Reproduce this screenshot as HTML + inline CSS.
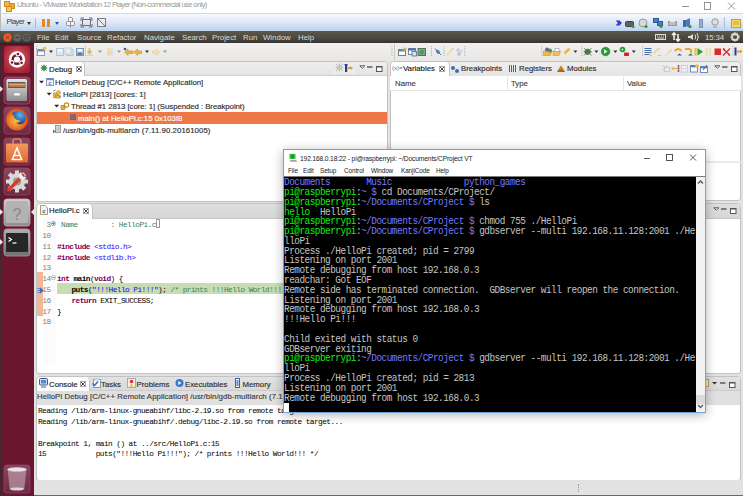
<!DOCTYPE html>
<html><head><meta charset="utf-8">
<style>
*{margin:0;padding:0;box-sizing:border-box}
html,body{width:743px;height:496px;overflow:hidden;background:#fff;font-family:"Liberation Sans",sans-serif}
.a{position:absolute}
.t{position:absolute;white-space:pre;line-height:1}
.code{font-family:"Liberation Mono",monospace;font-size:7.8px;letter-spacing:-0.56px}
.term{font-family:"Liberation Mono",monospace;font-size:9.4px;letter-spacing:-0.49px;line-height:9.79px;transform:scaleY(1.1);transform-origin:0 75%}
.mono{font-family:"Liberation Mono",monospace}
#title{left:0;top:0;width:743px;height:13px;background:#fff;border-left:1px solid #b9b9b9}
#vmtb{left:0;top:13px;width:743px;height:18px;background:linear-gradient(#f7f9fd,#dde7f4 50%,#bdd2ee);border-top:1px solid #cbdaf0;border-left:1px solid #b9b9b9}
#panel{left:0;top:31px;width:743px;height:12px;background:linear-gradient(#5c584b,#46443d 70%,#35332f)}
#launcher{left:0;top:43px;width:34px;height:453px;background:#69162e;border-left:1px solid #3c2a30}
#eclipse{left:34px;top:43px;width:709px;height:453px;background:#e3e3e3}
.menu{color:#dfdbd2;font-size:7.8px;top:33.5px}
.view{position:absolute;background:#fff;border:1px solid #c2c2c2;border-radius:4px 4px 3px 3px;overflow:hidden}
.tabrow{position:absolute;left:0;top:0;right:0;background:linear-gradient(#eeeeee,#e4e4e4);border-bottom:1px solid #d0d0d0}
.tab{position:absolute;top:0;background:#fff;border-right:1px solid #c2c2c2;border-radius:4px 4px 0 0;font-size:7.8px;color:#333}
.ui{font-size:7.8px;color:#2e2e2e;-webkit-text-stroke:0.15px currentColor}
#term{left:283px;top:149px;width:423px;height:264px;background:#fff;border:1px solid #6fa3d8;box-shadow:0 2px 10px rgba(0,0,0,.3)}
</style></head><body>
<!-- VMware title -->
<div id="title" class="a">
  <svg class="a" style="left:3px;top:1px" width="12" height="11"><rect x="0.5" y="0.5" width="5" height="5" fill="#f4b840" stroke="#c88a20"/><rect x="5.5" y="2.5" width="5" height="5" fill="#f0a830" stroke="#c88a20"/><rect x="2.5" y="5.5" width="5" height="5" fill="#f8c850" stroke="#c88a20"/></svg>
  <div class="t" style="left:16px;top:1.4px;font-size:7.6px;color:#999;letter-spacing:-0.61px">Ubuntu - VMware Workstation 12 Player (Non-commercial use only)</div>
  <svg class="a" style="left:676px;top:0" width="66" height="13"><g stroke="#8a8a8a" stroke-width="0.9" fill="none"><path d="M5 6.5h7"/><rect x="27.5" y="2.5" width="6" height="7"/><path d="M51 2.5l7 7M58 2.5l-7 7"/></g></svg>
</div>
<!-- VMware toolbar -->
<div id="vmtb" class="a">
  <div class="t" style="left:5.5px;top:4.2px;font-size:7.4px;color:#3a3a4a;letter-spacing:-0.55px">Player</div>
  <div class="a" style="left:26px;top:7.5px;border:2px solid transparent;border-left-width:2px;border-right-width:2px;border-top:3px solid #333;border-bottom:0"></div>
  <div class="a" style="left:34px;top:4px;width:1px;height:10px;background:#9fb8d8"></div>
  <div class="a" style="left:41px;top:5px;width:3px;height:8px;background:#e08a2c"></div>
  <div class="a" style="left:46px;top:5px;width:3px;height:8px;background:#e08a2c"></div>
  <div class="a" style="left:54px;top:8px;border:2px solid transparent;border-top:3px solid #2a4fc0;border-bottom:0"></div>
  <svg class="a" style="left:64px;top:3px" width="44" height="11"><g stroke="#8a8a8a" stroke-width="1" fill="#f4f6fa"><rect x="3.5" y="0.5" width="4" height="4" rx="1"/><rect x="1.5" y="4.5" width="4" height="4" rx="1"/><rect x="5.5" y="4.5" width="4" height="4" rx="1"/><path d="M5.5 8.5v2"/></g><g stroke="#707070" fill="none"><rect x="17.5" y="2.5" width="8" height="6"/><path d="M16 1h3M16 1v3M27 1h-3M27 1v3M16 10h3M16 10v-3M27 10h-3M27 10v-3"/></g><g stroke="#808080" fill="#e8ecf2"><rect x="32.5" y="1.5" width="8" height="8"/><path d="M32.5 1.5l8 8" /></g></svg>
  <svg class="a" style="left:613px;top:3px" width="130" height="12"><path d="M2.5 3.5l2.5 2.5-2.5 2.5M4.5 3.5l2.5 2.5-2.5 2.5" stroke="#2233cc" stroke-width="1.3" fill="none"/>
   <rect x="11.5" y="4.5" width="8" height="5" rx="1" fill="#606060" stroke="#404040"/><circle cx="19" cy="9.5" r="1.6" fill="#2aa02a"/>
   <circle cx="29" cy="6" r="4" fill="#d8d8d8" stroke="#999"/><circle cx="32" cy="9.5" r="1.6" fill="#2aa02a"/>
   <rect x="39.5" y="1.5" width="5" height="4" fill="#4a80c0" stroke="#2a5a90"/><rect x="43.5" y="4.5" width="5" height="4" fill="#4a80c0" stroke="#2a5a90"/><circle cx="47" cy="9.5" r="1.6" fill="#2aa02a"/>
   <rect x="54.5" y="4.5" width="8" height="4" fill="#bbb" stroke="#999"/><rect x="56" y="2" width="5" height="3" fill="#eee"/>
   <path d="M69 3l3 0l0 7l-3 0z" fill="#3a6ab0"/><path d="M72 3l4 -2v10l-4 -2z" fill="#4a7ac0"/><circle cx="76" cy="9.5" r="1.6" fill="#2aa02a"/>
   <rect x="85.5" y="2.5" width="3" height="8" fill="#9ab0d0" stroke="#7890b0"/>
   <circle cx="101" cy="5" r="3.2" fill="#ddd" stroke="#999"/><path d="M99 10h4" stroke="#999"/>
   <path d="M110.5 0v12" stroke="#a8c0e0"/>
   <rect x="117.5" y="2.5" width="9" height="8" fill="#f4d860" stroke="#c0a030"/><path d="M119 5h6M119 7h6" stroke="#c8a840"/></svg>
</div>
<!-- Ubuntu panel -->
<div id="panel" class="a">
  <svg class="a" style="left:2px;top:1px" width="30" height="11"><circle cx="5.5" cy="5.5" r="4.2" fill="#ee5a2a" stroke="#c84018" stroke-width="0.6"/><path d="M4 4l3 3M7 4l-3 3" stroke="#8a2a10" stroke-width="0.9"/>
  <circle cx="15.3" cy="5.5" r="4" fill="#67655f" stroke="#55534e" stroke-width="0.6"/><path d="M13.5 5.5h3.6" stroke="#3a3834" stroke-width="1"/>
  <circle cx="24.5" cy="5.5" r="4" fill="#67655f" stroke="#55534e" stroke-width="0.6"/><rect x="22.8" y="4" width="3.4" height="3" fill="none" stroke="#3a3834" stroke-width="0.8"/></svg>
</div>
<div class="t menu" style="left:37px">File</div>
<div class="t menu" style="left:55px">Edit</div>
<div class="t menu" style="left:77px">Source</div>
<div class="t menu" style="left:107px">Refactor</div>
<div class="t menu" style="left:144px">Navigate</div>
<div class="t menu" style="left:182px">Search</div>
<div class="t menu" style="left:212px">Project</div>
<div class="t menu" style="left:243px">Run</div>
<div class="t menu" style="left:263px">Window</div>
<div class="t menu" style="left:298px">Help</div>
<svg class="a" style="left:652px;top:31px" width="91" height="12"><g fill="none" stroke="#dfdbd2" stroke-width="1"><rect x="3.5" y="3.5" width="10" height="5"/></g><path d="M5 5h1M7 5h1M9 5h1M11 5h1M5 7h7" stroke="#dfdbd2"/>
<path d="M22 2v7M20 4l2-2 2 2M26 3v7M24 8l2 2 2-2" stroke="#f0ede8" stroke-width="1.6" fill="none"/>
<path d="M36 5h2l3-2v6l-3-2h-2z" fill="#dfdbd2"/><path d="M43 3.5q1.5 2.5 0 5M45 2q2.5 4 0 8" stroke="#dfdbd2" fill="none"/>
<circle cx="83" cy="6" r="3" fill="none" stroke="#dfdbd2" stroke-width="1.8"/><path d="M83 1.5v3" stroke="#dfdbd2" stroke-width="1.4"/><circle cx="83" cy="6" r="4.2" fill="none" stroke="#dfdbd2" stroke-width="1" stroke-dasharray="1.5 1.5"/></svg>
<div class="t menu" style="left:705px;letter-spacing:-0.1px">15:34</div>
<!-- Launcher -->

<div id="launcher" class="a"></div>
<svg class="a" style="left:0;top:43px" width="34" height="453">
<defs>
 <linearGradient id="tile" x1="0" y1="0" x2="0" y2="1"><stop offset="0" stop-color="#8a4660"/><stop offset="1" stop-color="#6c2a44"/></linearGradient>
 <radialGradient id="ubg" cx="0.5" cy="0.45" r="0.6"><stop offset="0" stop-color="#e06060"/><stop offset="1" stop-color="#a02236"/></radialGradient>
 <linearGradient id="cab" x1="0" y1="0" x2="0" y2="1"><stop offset="0" stop-color="#e4e4e4"/><stop offset="1" stop-color="#8e8e8e"/></linearGradient>
 <linearGradient id="bag" x1="0" y1="0" x2="0" y2="1"><stop offset="0" stop-color="#f49a5c"/><stop offset="1" stop-color="#e0682e"/></linearGradient>
 <linearGradient id="help" x1="0" y1="0" x2="0" y2="1"><stop offset="0" stop-color="#d0d0d0"/><stop offset="1" stop-color="#8c8c8c"/></linearGradient>
 <linearGradient id="trm" x1="0" y1="0" x2="0" y2="1"><stop offset="0" stop-color="#b0b0b0"/><stop offset="1" stop-color="#707070"/></linearGradient>
 <radialGradient id="ff" cx="0.45" cy="0.55" r="0.55"><stop offset="0" stop-color="#f8c040"/><stop offset="0.6" stop-color="#ee7a28"/><stop offset="1" stop-color="#d8481a"/></radialGradient>
 <radialGradient id="glob" cx="0.6" cy="0.3" r="0.7"><stop offset="0" stop-color="#58b8f0"/><stop offset="1" stop-color="#1a3e90"/></radialGradient>
</defs>
<rect x="0" y="0" width="34" height="2" fill="#4e1529"/>
<!-- ubuntu y 46-73 -->
<rect x="4" y="3" width="26" height="27" rx="3" fill="url(#ubg)"/>
<circle cx="17" cy="16.5" r="8.2" fill="#fff"/>
<circle cx="17" cy="16.5" r="4.3" fill="none" stroke="#6e1a2c" stroke-width="2.4"/>
<g stroke="#fff" stroke-width="1.1" fill="#6e1a2c"><circle cx="17.9" cy="11" r="1.9"/><circle cx="12" cy="19.5" r="1.9"/><circle cx="21.6" cy="19.8" r="1.9"/></g>
<!-- files y 77-104 -->
<rect x="4" y="34" width="26" height="27" rx="3" fill="url(#tile)" stroke="#94546c" stroke-width="0.8"/>
<rect x="6.5" y="36" width="20.5" height="22" rx="1.5" fill="url(#cab)"/>
<rect x="8" y="39" width="17.5" height="6" fill="#5a5a5a"/>
<rect x="8.5" y="40.5" width="16.5" height="1.4" fill="#f0b070"/><rect x="8.5" y="42.3" width="16.5" height="1.4" fill="#e88848"/>
<rect x="13.5" y="49.5" width="7" height="3.5" rx="1.5" fill="#f4f4f4" stroke="#888" stroke-width="0.6"/>
<path d="M0 43l3 3-3 3z" fill="#e8e8e8"/>
<!-- firefox y 107-134 -->
<rect x="4" y="64" width="26" height="27" rx="3" fill="url(#tile)" stroke="#8a4a62" stroke-width="0.8"/>
<circle cx="17" cy="76.5" r="11" fill="url(#ff)"/>
<path d="M12 70.5c3-3 9-3.5 12 0c2.5 3 2 8-1 10c-2 1.3-5 1-6.5-0.8c2.2 0.2 3.8-1 4-2.8c-2.6 0.8-5.5-0.4-6.2-2.6c-0.5-1.4-1.4-2.6-2.3-3.8z" fill="url(#glob)"/>
<!-- software y 138-165 -->
<rect x="4" y="95" width="26" height="27" rx="3" fill="url(#tile)" stroke="#8a4a62" stroke-width="0.8"/>
<rect x="6" y="100.5" width="22" height="19" rx="1" fill="url(#bag)"/>
<path d="M13 100.5v-2.5a2 2 0 0 1 2-2h4a2 2 0 0 1 2 2v2.5" fill="none" stroke="#f5a070" stroke-width="1.2"/>
<path d="M12.5 116l4.5-11 4.5 11M14 112.5h6M11.5 116.5h11" stroke="#fff" stroke-width="1.5" fill="none"/>
<!-- settings y 168-194 -->
<rect x="4" y="125" width="26" height="27" rx="3" fill="url(#tile)" stroke="#8a4a62" stroke-width="0.8"/>
<g transform="translate(17,138.5)">
<circle r="8.2" fill="#d8d8d8"/>
<g fill="#d8d8d8"><rect x="-2" y="-11" width="4" height="22"/><rect x="-11" y="-2" width="22" height="4"/><rect x="-2" y="-11" width="4" height="22" transform="rotate(45)"/><rect x="-2" y="-11" width="4" height="22" transform="rotate(-45)"/></g>
<circle r="4" fill="#9a9a9a"/>
<path d="M-8.5 8.5L6 -6" stroke="#d83a22" stroke-width="3.2" stroke-linecap="round"/>
<path d="M4.5 -9.5a4 4 0 1 0 5 5l-2.5 0.2l-2.4-2.4z" fill="#eee"/>
</g>
<!-- help y 199-225 -->
<rect x="4" y="156" width="26" height="27" rx="3" fill="url(#help)" stroke="#b8b8b8" stroke-width="0.8"/>
<rect x="6" y="158" width="22" height="22" rx="1.5" fill="#b2b2b2"/>
<text x="17" y="177" font-family="Liberation Sans" font-size="16" fill="#8a8a8a" text-anchor="middle">?</text>
<path d="M0 166l3 3-3 3z" fill="#e8e8e8"/>
<path d="M34 166l-3 3 3 3z" fill="#e8e8e8"/>
<!-- terminal y 229-255 -->
<rect x="4" y="186" width="26" height="27" rx="3" fill="url(#trm)" stroke="#a0a0a0" stroke-width="0.8"/>
<rect x="6" y="190" width="22" height="19" rx="1" fill="#262626"/>
<path d="M8.5 194.5l3 2-3 2" stroke="#fff" stroke-width="1.2" fill="none"/><path d="M12.5 200h4" stroke="#fff" stroke-width="1.2"/>
<path d="M0 196l3 3-3 3z" fill="#e8e8e8"/>
<!-- trash y 465-493 -->
<rect x="4" y="422" width="26" height="28" rx="3" fill="url(#tile)" stroke="#8a4a62" stroke-width="0.8"/>
<path d="M7.5 426h19l-2.2 20h-14.6z" fill="#b894a4" opacity="0.75"/>
<ellipse cx="17" cy="426.5" rx="9.5" ry="2" fill="#ece4e8" stroke="#c8b8c0" stroke-width="0.6"/>
<ellipse cx="17" cy="446" rx="7" ry="1.6" fill="#ddd0d6"/>
</svg>
<!-- Eclipse -->
<div id="eclipse" class="a"></div>
<!-- Eclipse toolbar -->
<div class="a" style="left:34px;top:43px;width:709px;height:18px;background:linear-gradient(#f2f1f0,#e8e7e5)"></div>
<svg class="a" style="left:34px;top:43px" width="709" height="18"><path d="M2.5 3v11" stroke="#a8a8a8" stroke-dasharray="1 1.2"/><rect x="3.5" y="6.5" width="7" height="6" fill="#fff" stroke="#8a9ab8"/><rect x="3.5" y="6.5" width="7" height="2" fill="#5a8ad0"/><circle cx="10.5" cy="5.5" r="1.8" fill="#f0c030"/><path d="M15.0 7.5h4l-2 2.5z" fill="#333"/><rect x="22.5" y="5.5" width="7" height="7" fill="#dde6f0" stroke="#b4c4d8"/><rect x="24" y="6" width="4" height="2.5" fill="#f4f8fc"/><rect x="32.5" y="6.5" width="6.5" height="6" fill="#dde6f0" stroke="#b4c4d8"/><rect x="31" y="5" width="6" height="6" fill="#e8eef4" stroke="#c4d0dc"/><rect x="42.5" y="5.5" width="7" height="7" fill="#c4d4ea" stroke="#7a94b8"/><rect x="44" y="6" width="4" height="2.5" fill="#fff"/><rect x="43.5" y="9.5" width="5" height="2.5" fill="#5a7ab0"/><path d="M51.5 3v11" stroke="#a8a8a8" stroke-dasharray="1 1.2"/><path d="M55.5 5v4M53.5 8l2 2.5 2-2.5" stroke="#e0b850" stroke-width="1.6" fill="none"/><rect x="53" y="11.5" width="6" height="1.5" fill="#c8d8e8"/><path d="M64.0 7.5h4l-2 2.5z" fill="#9a9a9a"/><ellipse cx="75" cy="10" rx="2.2" ry="2.8" fill="#f0d8a0"/><circle cx="75" cy="6.5" r="1.6" fill="#f0d8a0"/><rect x="77.5" y="4.5" width="1" height="8" fill="#c8d8e8"/><path d="M83.0 7.5h4l-2 2.5z" fill="#9a9a9a"/><path d="M90.5 9l3.5-3v2h5v2.5h-5v2z" fill="#f0b840" stroke="#c88a20" stroke-width="0.6"/><circle cx="91" cy="6" r="1.3" fill="#3a5a90"/><path d="M100 9l3.5-3v2h4v2.5h-4v2z" fill="#f0b840" stroke="#c88a20" stroke-width="0.6"/><path d="M111.0 7.5h4l-2 2.5z" fill="#333"/><path d="M126 9l-3.5-3v2h-4v2.5h4v2z" fill="#f4e0b0" stroke="#e0c890" stroke-width="0.6"/><path d="M129.0 7.5h4l-2 2.5z" fill="#9a9a9a"/><path d="M358.0 3v11" stroke="#a8a8a8" stroke-dasharray="1 1.2"/><path d="M360.5 1v16" stroke="#c8c8c8"/><rect x="364.5" y="6.5" width="7" height="6" fill="#fff" stroke="#8a7a60"/><rect x="364.5" y="6.5" width="7" height="2" fill="#5a8ad0"/><circle cx="371" cy="6" r="1.6" fill="#f0b030"/><rect x="374.5" y="5.5" width="7" height="6" fill="#fff" stroke="#7a8aa0"/><rect x="374.5" y="5.5" width="7" height="2" fill="#3a6ab0"/><rect x="378" y="8.5" width="4.5" height="4.5" fill="#dde" stroke="#3a5a90" stroke-width="0.7"/><rect x="384" y="5.5" width="7.5" height="7" fill="#8aa090" stroke="#5a6a60"/><circle cx="387.8" cy="9" r="2.2" fill="#3aaa3a"/><path d="M397.5 3v11" stroke="#a8a8a8" stroke-dasharray="1 1.2"/><path d="M401 5.5l6 6.5" stroke="#3a5a90" stroke-width="1"/><ellipse cx="404" cy="8.799999999999997" rx="2.2" ry="1.6" transform="rotate(45 404 8.799999999999997)" fill="#4a7ac0"/><path d="M410.0 3v11" stroke="#a8a8a8" stroke-dasharray="1 1.2"/><path d="M413 12.5l5.5-7" stroke="#f0e0a0" stroke-width="2.2" opacity="0.9"/><path d="M418 5l1.5 1" stroke="#bbb"/><circle cx="424" cy="7" r="1.8" fill="#d0c8e0"/><circle cx="427" cy="8" r="1.6" fill="#d8d0e4"/><circle cx="425" cy="11" r="1.8" fill="#c0b8dc"/><path d="M430.8 3v11" stroke="#a8a8a8" stroke-dasharray="1 1.2"/><path d="M507.9 3v11" stroke="#a8a8a8" stroke-dasharray="1 1.2"/><path d="M509.5 8h8.5l-1.5 4.5h-7z" fill="#f0b848" stroke="#c08a28" stroke-width="0.5"/><circle cx="513" cy="6.5" r="2" fill="#6a5ab0"/><circle cx="516" cy="7.5" r="2" fill="#3aa03a"/><path d="M519 8h7.5l-1.5 4.5h-6z" fill="#f0c060" stroke="#c08a28" stroke-width="0.5"/><rect x="521" y="5.5" width="4" height="3" fill="#fff" stroke="#8a9ab8" stroke-width="0.6"/><path d="M528.5 12.5l7-7" stroke="#e8b850" stroke-width="2.6"/><path d="M528.5 12.5l2-2" stroke="#fff4d0" stroke-width="2.6"/><path d="M539.4 7.5h4l-2 2.5z" fill="#333"/><path d="M547.9 3v11" stroke="#a8a8a8" stroke-dasharray="1 1.2"/><circle cx="553.6" cy="8.799999999999997" r="2.8" fill="#4a8a4a" stroke="#2a5a2a" stroke-width="0.5"/><path d="M550 5l7.5 7.5M557.5 5l-7.5 7.5M549.5 8.799999999999997h8.5" stroke="#4a6a4a" stroke-width="0.7"/><path d="M560.4 7.5h4l-2 2.5z" fill="#333"/><circle cx="571.6" cy="8.5" r="4.3" fill="#2a9a3a" stroke="#1a7028" stroke-width="0.5"/><path d="M570.2 6.200000000000003l3.2 2.3-3.2 2.3z" fill="#fff"/><path d="M579.4 7.5h4l-2 2.5z" fill="#333"/><circle cx="588.5" cy="6.5" r="2.8" fill="#2a9a3a"/><path d="M587.8 5.299999999999997l1.7 1.2-1.7 1.2z" fill="#fff"/><rect x="590" y="9.5" width="5" height="3.5" rx="0.8" fill="#d82020"/><path d="M597.8 7.5h4l-2 2.5z" fill="#333"/><path d="M608.5 3v11" stroke="#a8a8a8" stroke-dasharray="1 1.2"/><path d="M610.5 5.5h7M610.5 7.5h7M610.5 9.5h7M610.5 11.5h5" stroke="#4a70b0" stroke-width="1"/><path d="M616 11l2 1.5-2 1.5" fill="#e8b850"/><path d="M620 11q3-6 6-5" stroke="#e8d4a8" stroke-width="1.6" fill="none"/><path d="M624 12.5h3" stroke="#b8c4d8"/><path d="M631 12h2M634 11q2-4 4-4" stroke="#e8d4a8" stroke-width="1.6" fill="none"/><path d="M640.5 8q4-4 7 0" stroke="#e8a838" stroke-width="2" fill="none"/><path d="M643 12.5l2.5-2 2.5 2z" fill="#3a5a90"/><path d="M651 6h4q3 0 2 4" stroke="#e0a838" stroke-width="2" fill="none"/><path d="M654 12.5l2.5-2 2.5 2z" fill="#3a5a90"/><rect x="660.5" y="5" width="2.2" height="7.5" fill="#e8c040"/><path d="M663.5 5l5.5 3.8-5.5 3.8z" fill="#2aa03a"/><rect x="671.5" y="5" width="2.2" height="7.5" fill="#f0e0b0"/><rect x="675" y="5" width="2.2" height="7.5" fill="#f0e0b0"/><rect x="680.5" y="5.5" width="6.5" height="6.5" fill="#e02828"/><path d="M689 12.5l7-7M689 5.5l7 7" stroke="#d82828" stroke-width="1.2"/><circle cx="690" cy="6.5" r="1" fill="#d82828"/><circle cx="695" cy="11.5" r="1" fill="#d82828"/><path d="M698.9 3v11" stroke="#a8a8a8" stroke-dasharray="1 1.2"/><rect x="700.5" y="4.5" width="2" height="8" fill="#2a3a9a"/><path d="M703 8.5h4" stroke="#e0a020" stroke-width="1.8"/><path d="M706 6.5l2.5 2-2.5 2z" fill="#e0a020"/></svg>
<!-- Debug view -->
<div class="view" style="left:36px;top:61px;width:352px;height:141px">
  <div class="tabrow" style="height:14px"></div>
  <div class="tab" style="left:0;width:48px;height:14px"></div>
</div>
<svg class="a" style="left:39.5px;top:64px" width="8" height="8"><path d="M1 1l6 6M7 1l-6 6M0.3 4h7.4M4 0.3v7.4" stroke="#6a9a6a" stroke-width="0.8"/><circle cx="4" cy="4" r="2.3" fill="#3a9a4a" stroke="#2a6a3a" stroke-width="0.5"/></svg>
<div class="t ui" style="left:49px;top:65.5px;color:#222">Debug</div>
<svg class="a" style="left:76px;top:66px" width="6" height="6"><path d="M0.5 0.5h5v5h-5z" stroke="#8a8a8a" stroke-width="0.7" fill="none"/><path d="M0.8 0.8l4.4 4.4M5.2 0.8l-4.4 4.4" stroke="#4a4a4a" stroke-width="1" fill="none"/></svg>
<div class="a" style="left:333px;top:62px;width:23px;height:12px;background:#ecebea"></div>
<svg class="a" style="left:335px;top:63px" width="20" height="10"><g stroke="#b8b8b8" stroke-width="1"><path d="M1 1l7 7M8 1l-7 7M0.5 4.5h8M4.5 0.5v8"/></g><circle cx="4.5" cy="4.5" r="2.5" fill="#c4c4c4"/><rect x="10" y="1" width="2.2" height="8" fill="#2a3a9a"/><rect x="9.5" y="1" width="3" height="1.2" fill="#2a3a9a"/><path d="M12.5 5h4" stroke="#d8a020" stroke-width="1.8"/><path d="M15.5 3l2.5 2-2.5 2z" fill="#d8a020"/></svg>
<svg class="a" style="left:359px;top:65px" width="24" height="8"><path d="M0.8 0.8h5l-2.5 2.4z" fill="#fff" stroke="#555" stroke-width="1"/><rect x="8" y="1.2" width="5.5" height="1.6" fill="#666"/><rect x="17.5" y="1.5" width="5.5" height="5" fill="#fff" stroke="#555"/><rect x="17.5" y="1" width="5.5" height="1.5" fill="#555"/></svg>

<div class="a" style="left:37px;top:112px;width:350px;height:12px;background:#ee7745"></div>
<svg class="a" style="left:36px;top:76px" width="45" height="60">
<path d="M3 4.8h5l-2.5 2.8z" fill="#2a2a2a"/>
<rect x="10.5" y="2.5" width="7" height="7" fill="#eef4fc" stroke="#8a9ab8"/><rect x="10.5" y="2.5" width="7" height="1.6" fill="#5a8ad0"/><text x="14" y="8.6" font-family="Liberation Sans" font-size="5" font-weight="bold" fill="#2a5ab0" text-anchor="middle">c</text>
<path d="M10.6 16.8h5l-2.5 2.8z" fill="#2a2a2a"/>
<rect x="17.5" y="17" width="4.5" height="4.5" fill="#e8b838" stroke="#b08020" stroke-width="0.6"/><rect x="19.5" y="19.5" width="4.5" height="2.5" fill="#e8b838" stroke="#b08020" stroke-width="0.6"/><circle cx="22.5" cy="16.5" r="2" fill="#f0c040" stroke="#b08020" stroke-width="0.5"/><path d="M17.5 15l2-1M23.5 21.5l1.5-1" stroke="#3a6ab0" stroke-width="0.9"/>
<path d="M18.2 28.8h5l-2.5 2.8z" fill="#2a2a2a"/>
<rect x="25" y="29.5" width="4" height="4" fill="#e0b040" stroke="#a07820" stroke-width="0.6"/><circle cx="30.5" cy="29" r="2.2" fill="none" stroke="#c89020" stroke-width="1.2"/><path d="M28 31.5l1.2-1.2" stroke="#a07820"/>
<path d="M34 39.2h6M34 41.2h6M34 43.2h6" stroke="#3a5aa8" stroke-width="1.2"/>
<rect x="19.5" y="49.5" width="5" height="7" fill="#d8d8d8" stroke="#8a8a8a" stroke-width="0.8"/><path d="M20.5 52h3M20.5 54h3" stroke="#9a9a9a" stroke-width="0.6"/><path d="M17 53.5l2.8 2-2.8 2z" fill="#2aa03a"/>
</svg>
<div class="t ui" style="left:55px;top:78.7px">HelloPi Debug [C/C++ Remote Application]</div>
<div class="t ui" style="left:63px;top:90.7px">HelloPi [2813] [cores: 1]</div>
<div class="t ui" style="left:71px;top:102.7px;letter-spacing:-0.05px">Thread #1 2813 [core: 1] (Suspended : Breakpoint)</div>
<div class="t ui" style="left:78px;top:114.6px;color:#fff">main() at HelloPi.c:15 0x103f8</div>
<div class="t ui" style="left:63px;top:126.6px;letter-spacing:0.07px">/usr/bin/gdb-multiarch (7.11.90.20161005)</div>

<!-- Variables view -->
<div class="view" style="left:390px;top:61px;width:351px;height:140px">
  <div class="tabrow" style="height:15px"></div>
  <div class="tab" style="left:0;width:59px;height:15px"></div>
</div>
<div class="t" style="left:392px;top:65px;font-size:6px;color:#5a6aa0">(x)=</div>
<div class="t ui" style="left:403px;top:65px;color:#222">Variables</div>
<svg class="a" style="left:438.5px;top:66px" width="6" height="6"><path d="M0.5 0.5h5v5h-5z" stroke="#8a8a8a" stroke-width="0.7" fill="none"/><path d="M0.8 0.8l4.4 4.4M5.2 0.8l-4.4 4.4" stroke="#4a4a4a" stroke-width="1" fill="none"/></svg>
<div class="a" style="left:451px;top:66px;width:4px;height:4px;background:#3a70b0;border-radius:50%"></div>
<div class="a" style="left:455px;top:69px;width:4px;height:4px;background:#3a70b0;border-radius:50%"></div>
<div class="t ui" style="left:461px;top:65px">Breakpoints</div>
<div class="a" style="left:509px;top:65px;width:8px;height:7px;background:repeating-linear-gradient(90deg,#606070 0 1px,transparent 1px 2px)"></div>
<div class="t ui" style="left:519px;top:65px">Registers</div>
<div class="a" style="left:557px;top:65px;width:8px;height:7px;background:linear-gradient(#e0a030,#a06010);clip-path:polygon(50% 0,100% 100%,0 100%)"></div>
<div class="t ui" style="left:567px;top:65px">Modules</div>
<svg class="a" style="left:661px;top:64px" width="48" height="9"><path d="M1.5 1l5 5M1.5 6l5-5" stroke="#b8c8d8" stroke-width="1"/><rect x="3.5" y="3.5" width="5" height="4" fill="#e8eef4" stroke="#c0ccd8"/>
<circle cx="12" cy="4.5" r="1.6" fill="#f0c040"/><path d="M13 4.5h3" stroke="#e0b040"/><path d="M17.5 1v7" stroke="#8a9ab0"/><circle cx="17.5" cy="2" r="1" fill="#d04040"/><circle cx="17.5" cy="7" r="1" fill="#d04040"/><circle cx="17.5" cy="4.5" r="1" fill="#3a6ab0"/>
<rect x="20.5" y="1.5" width="6" height="6.5" fill="#eef0f4" stroke="#c8d0dc"/><path d="M21.5 4.5h4" stroke="#c8d0dc"/>
<rect x="29.5" y="1.5" width="7" height="6.5" fill="#fff" stroke="#7a8ab0"/><rect x="29.5" y="1.5" width="7" height="1.8" fill="#4a80c8"/><circle cx="36" cy="2" r="1.8" fill="#f0c030"/>
<rect x="39.5" y="2.5" width="7" height="6" fill="#fff" stroke="#7a8ab0"/><rect x="39.5" y="2.5" width="7" height="1.8" fill="#4a80c8"/><path d="M42 6l4-5" stroke="#777" stroke-width="1.2"/></svg>
<svg class="a" style="left:713.5px;top:65px" width="24" height="8"><path d="M0.8 0.8h5l-2.5 2.4z" fill="#fff" stroke="#555" stroke-width="1"/><rect x="8" y="1.2" width="5.5" height="1.6" fill="#666"/><rect x="17.5" y="1.5" width="5.5" height="5" fill="#fff" stroke="#555"/><rect x="17.5" y="1" width="5.5" height="1.5" fill="#555"/></svg>
<div class="a" style="left:390px;top:76px;width:351px;height:15px;background:#fff;border-bottom:1px solid #e4e4e4"></div>
<div class="a" style="left:507px;top:77px;width:1px;height:13px;background:#e4e4e4"></div>
<div class="a" style="left:623px;top:77px;width:1px;height:13px;background:#e4e4e4"></div>
<div class="t ui" style="left:395px;top:80px;color:#444">Name</div>
<div class="t ui" style="left:511px;top:80px;color:#444">Type</div>
<div class="t ui" style="left:627px;top:80px;color:#444">Value</div>
<div class="a" style="left:390px;top:161px;width:351px;height:2px;background:#eaeaea"></div>

<!-- Editor -->
<div class="view" style="left:36px;top:203px;width:670px;height:171px">
  <div class="tabrow" style="height:15px;background:linear-gradient(#dedede,#d6d6d6);border-bottom-color:#c8c8c8"></div>
  <div class="tab" style="left:0;width:56px;height:15px"></div>
</div>
<svg class="a" style="left:39px;top:205px" width="9" height="10"><path d="M1.5 0.5h4.5l2.5 2.5v6.5h-7z" fill="#f4f4f4" stroke="#b89860"/><text x="4.8" y="8" font-family="Liberation Sans" font-size="6" font-weight="bold" fill="#2a5ab0" text-anchor="middle">c</text></svg>
<div class="t ui" style="left:49px;top:207px;color:#222">HelloPi.c</div>
<svg class="a" style="left:83px;top:208px" width="6" height="6"><path d="M0.5 0.5h5v5h-5z" stroke="#8a8a8a" stroke-width="0.7" fill="none"/><path d="M0.8 0.8l4.4 4.4M5.2 0.8l-4.4 4.4" stroke="#4a4a4a" stroke-width="1" fill="none"/></svg>

<div class="a" style="left:43px;top:218px;width:13px;height:147px;background:#fbfbfb"></div>
<div class="a" style="left:37px;top:272px;width:6px;height:44px;background:#f4b896"></div>
<div class="a" style="left:57px;top:283.4px;width:230px;height:10.8px;background:#c6ddb3"></div>
<svg class="a" style="left:36.5px;top:286.5px" width="8" height="7"><path d="M0.5 1.5h3M0.5 3.5h3M0.5 5.5h3" stroke="#5a7ab0" stroke-width="0.9"/><path d="M3 0.5l4 3-4 3z" fill="#3a6ac0"/></svg>
<div class="t code" style="left:37px;top:222.3px;width:13.6px;text-align:right;color:#808080">3</div>
<div class="t code" style="left:57px;top:222.3px"><span style="color:#3f7f5f;"> Name        : HelloPi.c</span></div>
<div class="t code" style="left:37px;top:233.1px;width:13.6px;text-align:right;color:#808080">10</div>
<div class="t code" style="left:37px;top:243.9px;width:13.6px;text-align:right;color:#808080">11</div>
<div class="t code" style="left:57px;top:243.9px"><span style="color:#7f0055;font-weight:bold">#include</span><span style="color:#000;"> </span><span style="color:#2a00ff;">&lt;stdio.h&gt;</span></div>
<div class="t code" style="left:37px;top:254.6px;width:13.6px;text-align:right;color:#808080">12</div>
<div class="t code" style="left:57px;top:254.6px"><span style="color:#7f0055;font-weight:bold">#include</span><span style="color:#000;"> </span><span style="color:#2a00ff;">&lt;stdlib.h&gt;</span></div>
<div class="t code" style="left:37px;top:265.4px;width:13.6px;text-align:right;color:#808080">13</div>
<div class="t code" style="left:37px;top:276.2px;width:13.6px;text-align:right;color:#808080">14</div>
<div class="t code" style="left:57px;top:276.2px"><span style="color:#7f0055;font-weight:bold">int</span><span style="color:#000;"> </span><span style="color:#000;font-weight:bold">main</span><span style="color:#000;">(</span><span style="color:#7f0055;font-weight:bold">void</span><span style="color:#000;">) {</span></div>
<div class="t code" style="left:37px;top:287.0px;width:13.6px;text-align:right;color:#808080">15</div>
<div class="t code" style="left:71.5px;top:287.0px"><span style="color:#000;font-weight:bold">puts</span><span style="color:#000;">(</span><span style="color:#2a00ff;">"!!!Hello Pi!!!"</span><span style="color:#000;">); </span><span style="color:#3f7f5f;">/* prints !!!Hello World!!! */</span></div>
<div class="t code" style="left:37px;top:297.8px;width:13.6px;text-align:right;color:#808080">16</div>
<div class="t code" style="left:71.5px;top:297.8px"><span style="color:#7f0055;font-weight:bold">return</span><span style="color:#000;"> EXIT_SUCCESS;</span></div>
<div class="t code" style="left:37px;top:308.5px;width:13.6px;text-align:right;color:#808080">17</div>
<div class="t code" style="left:57px;top:308.5px"><span style="color:#000;">}</span></div>
<div class="t code" style="left:37px;top:319.3px;width:13.6px;text-align:right;color:#808080">18</div>
<svg class="a" style="left:50.5px;top:221.0px" width="5" height="5"><circle cx="2.5" cy="2.5" r="2.1" fill="#fff" stroke="#7a9ac0" stroke-width="0.8"/><path d="M1.2 2.5h2.6M2.5 1.2v2.6" stroke="#4a6a9a" stroke-width="0.8"/></svg>
<svg class="a" style="left:50.5px;top:274.9px" width="5" height="5"><circle cx="2.5" cy="2.5" r="2.1" fill="#fff" stroke="#9ab0c8" stroke-width="0.8"/><path d="M1.2 2.5h2.6" stroke="#6a8ab0" stroke-width="0.8"/></svg>
<div class="a" style="left:156px;top:218.8px;width:4px;height:9px;border:1px solid #999"></div>
<!-- Outline view (right) -->
<div class="view" style="left:690px;top:203px;width:51px;height:171px">
  <div class="tabrow" style="height:15px;background:linear-gradient(#dedede,#d6d6d6);border-bottom-color:#c8c8c8"></div>
</div>
<svg class="a" style="left:713px;top:207px" width="24" height="8"><path d="M0.8 0.8h5l-2.5 2.4z" fill="#fff" stroke="#555" stroke-width="1"/><rect x="8" y="1.2" width="5.5" height="1.6" fill="#666"/><rect x="17.5" y="1.5" width="5.5" height="5" fill="#fff" stroke="#555"/><rect x="17.5" y="1" width="5.5" height="1.5" fill="#555"/></svg>

<!-- Console -->
<div class="view" style="left:36px;top:376px;width:705px;height:105px">
  <div class="tabrow" style="height:14px;background:linear-gradient(#e2e2e2,#dadada);border-bottom-color:#cccccc"></div>
  <div class="tab" style="left:0;width:53px;height:14px"></div>
  <div class="a" style="left:0;top:14px;width:706px;height:14px;background:#e0e0e0"></div>
</div>
<svg class="a" style="left:712px;top:381px" width="24" height="8"><path d="M0 1h5l-2.5 2.5z" fill="#333"/><rect x="8" y="1.2" width="5.5" height="1.6" fill="#666"/><rect x="17.5" y="1.5" width="5.5" height="5" fill="#fff" stroke="#555"/><rect x="17.5" y="1" width="5.5" height="1.5" fill="#555"/></svg>
<div class="a" style="left:705px;top:379px;width:4px;height:8px;background:#f4ecd0;border:1px solid #c0a050"></div>
<svg class="a" style="left:39px;top:378px" width="9" height="10"><rect x="0.5" y="0.5" width="8" height="6.5" rx="1" fill="#cfe0f4" stroke="#3a5a90"/><rect x="2" y="2" width="5" height="3.5" fill="#5a8ad0"/><path d="M2 9h5" stroke="#3a5a90"/></svg>
<div class="t ui" style="left:49px;top:380.7px;color:#222">Console</div>
<svg class="a" style="left:80px;top:381px" width="6" height="6"><path d="M0.5 0.5h5v5h-5z" stroke="#8a8a8a" stroke-width="0.7" fill="none"/><path d="M0.8 0.8l4.4 4.4M5.2 0.8l-4.4 4.4" stroke="#4a4a4a" stroke-width="1" fill="none"/></svg>
<svg class="a" style="left:92px;top:378px" width="9" height="10"><rect x="1.5" y="1.5" width="7" height="8" fill="#f4f6f8" stroke="#8a9aaa"/><rect x="3" y="0.5" width="4" height="2" fill="#c8d0d8"/><path d="M0.5 5.5l2 2 3.5-4" stroke="#2a6ac0" stroke-width="1.3" fill="none"/></svg>
<div class="t ui" style="left:101px;top:380.7px">Tasks</div>
<svg class="a" style="left:127px;top:378px" width="9" height="10"><rect x="0.5" y="0.5" width="8" height="9" fill="#f4f0e8" stroke="#a8a8b8"/><circle cx="4.5" cy="3.5" r="1.8" fill="#e03030"/><path d="M2.5 8.5l2-3 2 3z" fill="#f0b020"/></svg>
<div class="t ui" style="left:136.5px;top:380.7px">Problems</div>
<svg class="a" style="left:175px;top:378px" width="9" height="10"><circle cx="4.5" cy="5" r="4" fill="#3a78d0"/><path d="M3.3 3l3 2-3 2z" fill="#fff"/></svg>
<div class="t ui" style="left:185px;top:380.7px">Executables</div>
<svg class="a" style="left:234px;top:378px" width="7" height="10"><rect x="1.5" y="0.5" width="4" height="9" fill="#fff" stroke="#3a60b0"/><rect x="2.5" y="2" width="2" height="6" fill="#5a8ad0"/></svg>
<div class="t ui" style="left:242.5px;top:380.7px">Memory</div>
<div class="t ui" style="left:37px;top:392.6px;color:#3c3c3c;letter-spacing:0.07px">HelloPi Debug [C/C++ Remote Application] /usr/bin/gdb-multiarch (7.11.90.20161005)</div>
<div class="t code" style="left:38px;top:408.2px;color:#000">Reading /lib/arm-linux-gnueabihf/libc-2.19.so from remote target...</div>
<div class="t code" style="left:38px;top:419.0px;color:#000">Reading /lib/arm-linux-gnueabihf/.debug/libc-2.19.so from remote target...</div>
<div class="t code" style="left:38px;top:440.5px;color:#000">Breakpoint 1, main () at ../src/HelloPi.c:15</div>
<div class="t code" style="left:38px;top:451.3px;color:#000">15            puts("!!!Hello Pi!!!"); /* prints !!!Hello World!!! */</div>
<div class="a" style="left:34px;top:480px;width:709px;height:15px;background:#e2e2e2"></div>
<div class="a" style="left:34px;top:495px;width:709px;height:1px;background:#6a6a6a"></div>
<div class="a" style="left:578px;top:484px;width:1px;height:8px;border-left:1px dotted #999"></div>


<!-- Terminal -->
<div id="term" class="a"></div>
<div class="a" style="left:284px;top:150px;width:421px;height:26px;background:#fff"></div>
<svg class="a" style="left:289px;top:153px" width="9" height="10"><rect x="0.5" y="0.8" width="6" height="5.2" fill="#30c030"/><rect x="2.5" y="2" width="2" height="3" fill="#1a6a8a"/><path d="M1 7h6l1.5 1.8h-7z" fill="#a0a0a0"/></svg>
<div class="t" style="left:300px;top:155.5px;font-size:6.7px;color:#222;letter-spacing:-0.15px">192.168.0.18:22 - pi@raspberrypi: ~/Documents/CProject VT</div>
<svg class="a" style="left:640px;top:150px" width="60" height="16"><g stroke="#444" stroke-width="0.9" fill="none"><path d="M4 8.5h6"/><rect x="26.5" y="4.5" width="6" height="6"/><path d="M50 4.5l6 6M56 4.5l-6 6"/></g></svg>
<div class="t" style="left:288px;top:167.8px;font-size:6.4px;color:#222;letter-spacing:-0.1px">File</div>
<div class="t" style="left:303px;top:167.8px;font-size:6.4px;color:#222;letter-spacing:-0.1px">Edit</div>
<div class="t" style="left:320px;top:167.8px;font-size:6.4px;color:#222;letter-spacing:-0.1px">Setup</div>
<div class="t" style="left:344px;top:167.8px;font-size:6.4px;color:#222;letter-spacing:-0.1px">Control</div>
<div class="t" style="left:371px;top:167.8px;font-size:6.4px;color:#222;letter-spacing:-0.1px">Window</div>
<div class="t" style="left:401px;top:167.8px;font-size:6.4px;color:#222;letter-spacing:-0.1px">KanjiCode</div>
<div class="t" style="left:436px;top:167.8px;font-size:6.4px;color:#222;letter-spacing:-0.1px">Help</div>
<div class="a" style="left:284px;top:176px;width:421px;height:1px;background:#7a7a7a"></div>
<div class="a" style="left:284px;top:177px;width:412px;height:235px;background:#000"></div>
<div class="a" style="left:696px;top:177px;width:9px;height:235px;background:#f2f2f2"></div>
<div class="a" style="left:696px;top:395px;width:9px;height:9px;background:#dadada"></div>
<svg class="a" style="left:696px;top:176px" width="9" height="236"><g stroke="#555" stroke-width="1.3" fill="none"><path d="M2 7.5l2.5-2.5L7 7.5"/><path d="M2 229l2.5 2.5L7 229"/></g></svg>
<div class="t term" style="left:284px;top:178.1px"><span style="color:#7878f8">Documents       Music              python_games</span></div>
<div class="t term" style="left:284px;top:187.9px"><span style="color:#10f010">pi@raspberrypi</span><span style="color:#c4c4c4">:</span><span style="color:#7878f8">~ $ </span><span style="color:#c4c4c4">cd Documents/CProject/</span></div>
<div class="t term" style="left:284px;top:197.7px"><span style="color:#10f010">pi@raspberrypi</span><span style="color:#c4c4c4">:</span><span style="color:#7878f8">~/Documents/CProject $ </span><span style="color:#c4c4c4">ls</span></div>
<div class="t term" style="left:284px;top:207.5px"><span style="color:#10f010">hello</span><span style="color:#c4c4c4">  HelloPi</span></div>
<div class="t term" style="left:284px;top:217.3px"><span style="color:#10f010">pi@raspberrypi</span><span style="color:#c4c4c4">:</span><span style="color:#7878f8">~/Documents/CProject $ </span><span style="color:#c4c4c4">chmod 755 ./HelloPi</span></div>
<div class="t term" style="left:284px;top:227.0px"><span style="color:#10f010">pi@raspberrypi</span><span style="color:#c4c4c4">:</span><span style="color:#7878f8">~/Documents/CProject $ </span><span style="color:#c4c4c4">gdbserver --multi 192.168.11.128:2001 ./He</span></div>
<div class="t term" style="left:284px;top:236.8px"><span style="color:#c4c4c4">lloPi</span></div>
<div class="t term" style="left:284px;top:246.6px"><span style="color:#c4c4c4">Process ./HelloPi created; pid = 2799</span></div>
<div class="t term" style="left:284px;top:256.4px"><span style="color:#c4c4c4">Listening on port 2001</span></div>
<div class="t term" style="left:284px;top:266.2px"><span style="color:#c4c4c4">Remote debugging from host 192.168.0.3</span></div>
<div class="t term" style="left:284px;top:276.0px"><span style="color:#c4c4c4">readchar: Got EOF</span></div>
<div class="t term" style="left:284px;top:285.8px"><span style="color:#c4c4c4">Remote side has terminated connection.  GDBserver will reopen the connection.</span></div>
<div class="t term" style="left:284px;top:295.6px"><span style="color:#c4c4c4">Listening on port 2001</span></div>
<div class="t term" style="left:284px;top:305.4px"><span style="color:#c4c4c4">Remote debugging from host 192.168.0.3</span></div>
<div class="t term" style="left:284px;top:315.2px"><span style="color:#c4c4c4">!!!Hello Pi!!!</span></div>
<div class="t term" style="left:284px;top:334.7px"><span style="color:#c4c4c4">Child exited with status 0</span></div>
<div class="t term" style="left:284px;top:344.5px"><span style="color:#c4c4c4">GDBserver exiting</span></div>
<div class="t term" style="left:284px;top:354.3px"><span style="color:#10f010">pi@raspberrypi</span><span style="color:#c4c4c4">:</span><span style="color:#7878f8">~/Documents/CProject $ </span><span style="color:#c4c4c4">gdbserver --multi 192.168.11.128:2001 ./He</span></div>
<div class="t term" style="left:284px;top:364.1px"><span style="color:#c4c4c4">lloPi</span></div>
<div class="t term" style="left:284px;top:373.9px"><span style="color:#c4c4c4">Process ./HelloPi created; pid = 2813</span></div>
<div class="t term" style="left:284px;top:383.7px"><span style="color:#c4c4c4">Listening on port 2001</span></div>
<div class="t term" style="left:284px;top:393.5px"><span style="color:#c4c4c4">Remote debugging from host 192.168.0.3</span></div>
<div class="a" style="left:284px;top:403px;width:5px;height:9px;background:#fff"></div>
</body></html>
